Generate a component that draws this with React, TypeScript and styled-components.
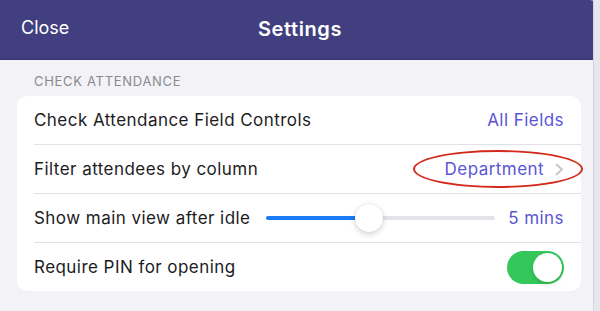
import styled, { createGlobalStyle } from 'styled-components';

const GlobalStyle = createGlobalStyle`
  html, body {
    margin: 0;
    padding: 0;
    background: #f2f2f7;
    font-family: Inter, "Liberation Sans", Arial, sans-serif;
  }
`;

export default function App() {
  return (
    <>
      <GlobalStyle />
      <Screen>
        <Header>
          <CloseButton>Close</CloseButton>
          <Title>Settings</Title>
        </Header>
        <Content>
          <SectionLabel>CHECK ATTENDANCE</SectionLabel>
          <Card>
            <Row>
              <Label>Check Attendance Field Controls</Label>
              <Value>All Fields</Value>
            </Row>
            <Row>
              <Label>Filter attendees by column</Label>
              <Circled>
                <Value>Department</Value>
                <Chevron width="9" height="13" viewBox="0 0 9 13">
                  <path d="M1.5 1.5 L7 6.5 L1.5 11.5" fill="none" stroke="#c4c4c8" strokeWidth="1.7" strokeLinecap="round" strokeLinejoin="round" />
                </Chevron>
                <Ellipse />
              </Circled>
            </Row>
            <Row>
              <Label>Show main view after idle</Label>
              <Slider>
                <Track>
                  <Fill style={{ width: '45%' }} />
                </Track>
                <Thumb style={{ left: '45%' }} />
              </Slider>
              <Value>5 mins</Value>
            </Row>
            <Row $last>
              <Label>Require PIN for opening</Label>
              <Toggle>
                <Knob />
              </Toggle>
            </Row>
          </Card>
        </Content>
        <EdgeStrip />
      </Screen>
    </>
  );
}

const Screen = styled.div`
  position: relative;
  width: 600px;
  height: 311px;
  overflow: hidden;
  background: #f2f2f7;
`;

const EdgeStrip = styled.div`
  position: absolute;
  top: 0;
  right: 0;
  width: 6px;
  height: 100%;
  background: #e6e6ef;
  border-left: 1px solid #d4d4e0;
`;

const Header = styled.div`
  position: relative;
  height: 59px;
  background: #423f80;
  border-bottom: 1px solid #37346e;
  display: flex;
  align-items: center;
  justify-content: center;
  border-top-right-radius: 10px;
`;

const CloseButton = styled.span`
  position: absolute;
  left: 21px;
  top: 17px;
  color: #fff;
  font-size: 18px;
`;

const Title = styled.span`
  color: #fff;
  font-size: 20px;
  font-weight: 600;
  letter-spacing: 0.6px;
  margin-top: -2px;
`;

const Content = styled.div`
  padding: 0 19px 0 17px;
`;

const SectionLabel = styled.div`
  padding: 13px 0 0 17px;
  height: 23px;
  font-size: 13px;
  color: #8a8a8e;
  letter-spacing: 0.7px;
`;

const Card = styled.div`
  background: #fff;
  border-radius: 10px;
  padding-left: 17px;
`;

const Row = styled.div<{ $last?: boolean }>`
  height: 48px;
  display: flex;
  align-items: center;
  padding-right: 17px;
  border-bottom: ${(p) => (p.$last ? 'none' : '1px solid #e2e2e6')};
`;

const Label = styled.span`
  flex: 1;
  font-size: 17px;
  letter-spacing: 0.45px;
  color: #1c1c1e;
  white-space: nowrap;
`;

const Value = styled.span`
  font-size: 17px;
  letter-spacing: 0.45px;
  color: #5a55d6;
`;

const Circled = styled.div`
  position: relative;
  display: flex;
  align-items: center;
  height: 21px;
  gap: 11px;
`;

const Chevron = styled.svg`
  display: block;
  margin-top: 1px;
`;

const Ellipse = styled.div`
  position: absolute;
  left: -32px;
  right: -19px;
  top: -9px;
  bottom: -8px;
  border: 2px solid #d42a1c;
  border-radius: 50%;
`;

const Slider = styled.div`
  position: relative;
  width: 229px;
  height: 28px;
  margin-right: 13px;
  display: flex;
  align-items: center;
`;

const Track = styled.div`
  width: 100%;
  height: 4px;
  border-radius: 2px;
  background: #e3e3e8;
  overflow: hidden;
`;

const Fill = styled.div`
  height: 100%;
  background: #1a7cf5;
`;

const Thumb = styled.div`
  position: absolute;
  top: 0;
  width: 28px;
  height: 28px;
  margin-left: -14px;
  border-radius: 50%;
  background: #fff;
  box-shadow: 0 2px 6px rgba(0, 0, 0, 0.18), 0 0 1px rgba(0, 0, 0, 0.15);
`;

const Toggle = styled.div`
  width: 57px;
  height: 33px;
  border-radius: 17px;
  background: #34c759;
  display: flex;
  align-items: center;
  justify-content: flex-end;
  padding-right: 2px;
  box-sizing: border-box;
`;

const Knob = styled.div`
  width: 29px;
  height: 29px;
  border-radius: 50%;
  background: #fff;
  box-shadow: 0 2px 4px rgba(0, 0, 0, 0.15);
`;
